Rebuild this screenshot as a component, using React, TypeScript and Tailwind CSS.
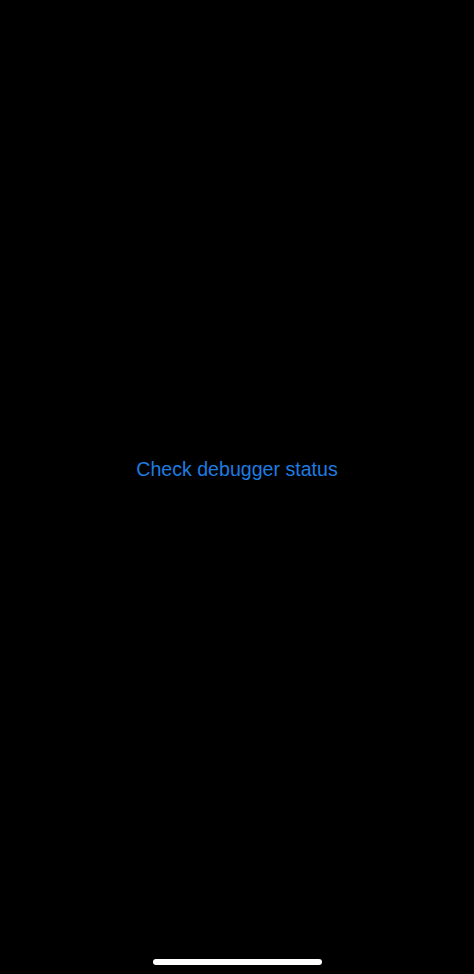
import React from 'react';

const App: React.FC = () => {
  return (
    <div className="relative flex h-[974px] w-full flex-col bg-black" style={{ fontFamily: '"Liberation Sans", Arial, sans-serif' }}>
      <div className="flex flex-1 items-center justify-center pb-[20px]">
        <button type="button" className="text-[19.6px] leading-none text-[#1f7be0]">
          Check debugger status
        </button>
      </div>
      <div className="flex justify-center pb-[9px]">
        <div className="h-[6px] w-[169px] rounded-full bg-white" />
      </div>
    </div>
  );
};

export default App;
